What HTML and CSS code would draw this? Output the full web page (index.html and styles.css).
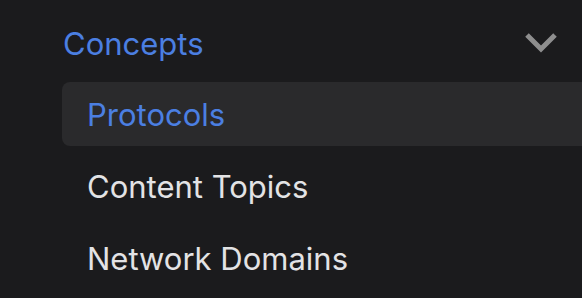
FILE: index.html
```html
<!DOCTYPE html>
<html lang="en">
<head>
    <meta charset="UTF-8">
    <title>Docs sidebar</title>
    <link rel="stylesheet" href="styles.css">
</head>
<body>
    <nav class="sidebar">
        <div class="category">
            <a class="category-link" href="#">Concepts</a>
            <span class="caret">
                <svg width="34" height="22" viewBox="0 0 34 22">
                    <path d="M3 3 L17 17 L31 3" fill="none" stroke="#8e8e8e" stroke-width="5"/>
                </svg>
            </span>
        </div>
        <ul class="menu">
            <li><a class="menu-link active" href="#">Protocols</a></li>
            <li><a class="menu-link" href="#">Content Topics</a></li>
            <li><a class="menu-link" href="#">Network Domains</a></li>
        </ul>
    </nav>
</body>
</html>
```

FILE: styles.css
```css
body {
    margin: 0;
    background-color: #1b1b1d;
    font-family: Inter, "Noto Sans", sans-serif;
    overflow: hidden;
}
a {
    text-decoration: none;
}
.sidebar {
    padding: 11px 0 0 62px;
}
.category {
    display: flex;
    align-items: center;
    justify-content: space-between;
    height: 64px;
    margin-bottom: 7px;
    padding-right: 24px;
}
.category-link {
    color: #4b7fe2;
    font-size: 31px;
    padding-left: 1px;
}
.caret {
    display: flex;
}
.menu {
    list-style: none;
    margin: 0;
    padding: 0;
    display: flex;
    flex-direction: column;
    gap: 8px;
}
.menu-link {
    display: flex;
    align-items: center;
    height: 64px;
    padding-left: 25px;
    margin-right: -20px;
    border-radius: 8px;
    color: #e3e3e5;
    font-size: 31px;
}
.menu-link.active {
    background-color: #2a2a2c;
    color: #4b7fe2;
}
```
